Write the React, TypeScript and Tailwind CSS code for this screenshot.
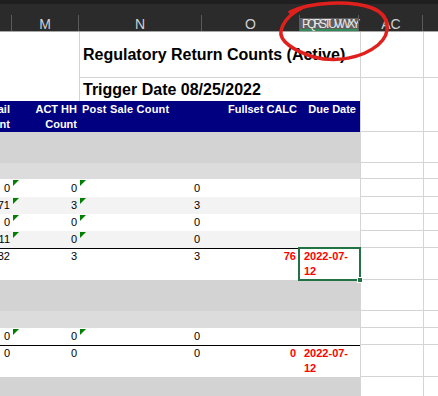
import React from 'react';

type RowProps = {
  h: string;
  bg?: string;
  topBlack?: boolean;
  line?: boolean;
  children?: React.ReactNode;
};

function Row({ h, bg = 'bg-white', topBlack, line = true, children }: RowProps) {
  return (
    <div className={`flex ${h}`}>
      <div className={`flex w-[360px] ${bg} ${topBlack ? 'border-t border-black' : ''}`}>{children}</div>
      <div className={`w-[64px] border-l border-r border-[#d4d4d4] bg-white ${line ? 'border-b' : ''}`} />
      <div className={`flex-1 bg-white ${line ? 'border-b border-[#d4d4d4]' : ''}`} />
    </div>
  );
}

function Flag() {
  return (
    <span className="absolute left-[1px] top-[1px] h-0 w-0 border-r-[6px] border-t-[6px] border-r-transparent border-t-[#008000]" />
  );
}

function DataRow({ h, bg, vals, flags = true }: { h: string; bg?: string; vals: string[]; flags?: boolean }) {
  return (
    <Row h={h} bg={bg}>
      <div className="flex w-[12px] items-center justify-end overflow-hidden whitespace-nowrap pr-[2px]">{vals[0]}</div>
      <div className="relative flex w-[67px] items-center justify-end pr-[2px]">
        {flags && <Flag />}
        {vals[1]}
      </div>
      <div className="relative flex w-[123px] items-center justify-end pr-[2px]">
        {flags && <Flag />}
        {vals[2]}
      </div>
      <div className="w-[98px]" />
      <div className="w-[60px]" />
    </Row>
  );
}

function TotalRow({ vals, calc, selected }: { vals: string[]; calc: string; selected?: boolean }) {
  return (
    <Row h="h-[32px]" topBlack>
      <div className="flex w-[12px] items-start justify-end overflow-hidden whitespace-nowrap pr-[2px] leading-[15px]">{vals[0]}</div>
      <div className="w-[67px] pr-[2px] text-right leading-[15px]">{vals[1]}</div>
      <div className="w-[123px] pr-[2px] text-right leading-[15px]">{vals[2]}</div>
      <div className="w-[98px] pr-[4px] text-right font-bold leading-[15px] text-[#ff0000]">{calc}</div>
      <div className="relative w-[60px] pl-[4px] font-bold leading-[15px] text-[#ff0000]">
        2022-07-
        <br />
        12
        {selected && (
          <div className="absolute -bottom-[1px] -left-[2px] -right-[1px] -top-[2px] z-10 border-2 border-[#217346]">
            <span className="absolute -bottom-[4px] -right-[4px] h-[6px] w-[6px] border border-white bg-[#217346]" />
          </div>
        )}
      </div>
    </Row>
  );
}

function HeadCell({ w, label, sep = true }: { w: string; label?: string; sep?: boolean }) {
  return (
    <div className={`flex ${w}`}>
      <div className="flex-1 pt-[12px] text-center text-[14px] leading-[16px] text-[#d0d0d0]">{label}</div>
      {sep && <div className="h-[16px] w-px self-end bg-[#5a5a5a]" />}
    </div>
  );
}

export default function App() {
  return (
    <div className="relative h-[396px] w-[438px] overflow-hidden bg-white text-[11px] text-black [font-family:'Liberation_Sans',Arial,sans-serif]">
      <div className="h-[4px] bg-[#1f1f1f]" />
      <div className="flex h-[28px] border-b border-[#a6a6a6] bg-[#2b2b2b]">
        <HeadCell w="w-[12px]" />
        <HeadCell w="w-[67px]" label="M" />
        <HeadCell w="w-[123px]" label="N" />
        <HeadCell w="w-[98px]" label="O" />
        <div className="flex w-[60px]">
          <div className="mt-[14px] flex h-[13px] w-[58px] items-center border-b-2 border-[#2e8b57] bg-[#5e5e5e]">
            <span className="whitespace-nowrap pl-[2px] text-[12px] leading-[12px] tracking-[-3px] text-[#e6e6e6]">
              PQRSTUVWXY
            </span>
          </div>
          <div className="h-[16px] w-px self-end bg-[#5a5a5a]" />
        </div>
        <HeadCell w="w-[63px]" label="AC" />
        <div className="flex-1" />
      </div>

      <Row h="h-[46px]">
        <div className="w-[79px]" />
        <div className="flex w-[281px] items-center border-b border-l border-[#d4d4d4] pl-[3px] text-[16px] font-bold">
          Regulatory Return Counts (Active)
        </div>
      </Row>
      <Row h="h-[23px]" line={false}>
        <div className="w-[79px]" />
        <div className="flex w-[281px] items-center border-l border-[#d4d4d4] pl-[3px] text-[16px] font-bold">
          Trigger Date 08/25/2022
        </div>
      </Row>

      <Row h="h-[31px]" bg="bg-[#000080]">
        <div className="flex w-[12px] flex-col items-end overflow-hidden whitespace-nowrap pr-[2px] pt-[1px] font-bold leading-[15px] text-white">
          <span>Retail</span>
          <span>Count</span>
        </div>
        <div className="w-[67px] pr-[2px] pt-[1px] text-right font-bold leading-[15px] text-white">
          ACT HH
          <br />
          Count
        </div>
        <div className="w-[123px] pl-[3px] pt-[1px] font-bold leading-[15px] tracking-[0.2px] text-white">Post Sale Count</div>
        <div className="w-[98px] pr-[3px] pt-[1px] text-right font-bold leading-[15px] text-white">Fullset CALC</div>
        <div className="w-[60px] whitespace-nowrap pr-[4px] pt-[1px] text-right font-bold leading-[15px] text-white">Due Date</div>
      </Row>

      <Row h="h-[31px]" bg="bg-[#d3d3d3]" />
      <Row h="h-[16px]" bg="bg-[#dcdcdc]" />
      <DataRow h="h-[18px]" vals={['0', '0', '0']} />
      <DataRow h="h-[17px]" bg="bg-[#f3f3f3]" vals={['71', '3', '3']} />
      <DataRow h="h-[17px]" vals={['0', '0', '0']} />
      <DataRow h="h-[17px]" bg="bg-[#f3f3f3]" vals={['11', '0', '0']} />
      <TotalRow vals={['32', '3', '3']} calc="76" selected />
      <Row h="h-[31px]" bg="bg-[#d3d3d3]" />
      <Row h="h-[17px]" bg="bg-[#dcdcdc]" />
      <DataRow h="h-[17px]" vals={['0', '0', '0']} />
      <TotalRow vals={['0', '0', '0']} calc="0" />
      <Row h="h-[40px]" bg="bg-[#d3d3d3]" />

      <svg className="pointer-events-none absolute left-0 top-0" width="438" height="70" viewBox="0 0 438 70">
        <path
          d="M 290 12 C 310 2, 350 0, 372 8 C 390 15, 392 33, 378 45 C 362 58, 336 63, 314 57 C 294 51, 279 41, 281 31 C 283 22, 290 14, 302 8"
          fill="none"
          stroke="#e0201c"
          strokeWidth="3.5"
          strokeLinecap="round"
        />
      </svg>
    </div>
  );
}
